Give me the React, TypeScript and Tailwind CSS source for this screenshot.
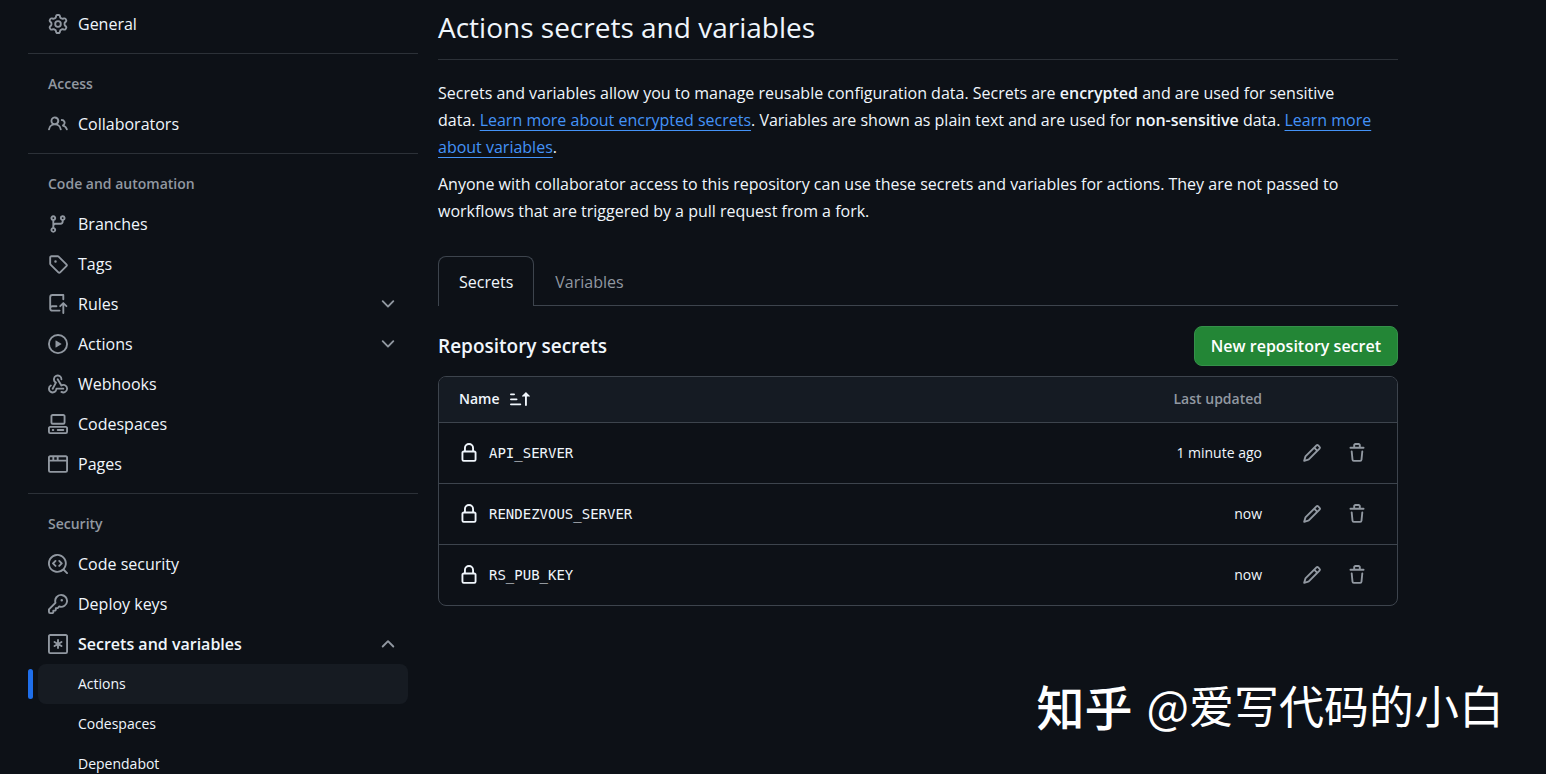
import React from 'react';

const ICONS = {
  gear: 'M8 0a8.2 8.2 0 0 1 .701.031C9.444.095 9.99.645 10.16 1.29l.288 1.107c.018.066.079.158.212.224.231.114.454.243.668.386.123.082.233.09.299.071l1.103-.303c.644-.176 1.392.021 1.82.63.27.385.506.792.704 1.218.315.675.111 1.422-.364 1.891l-.814.806c-.049.048-.098.147-.088.294.016.257.016.515 0 .772-.01.147.038.246.088.294l.814.806c.475.469.679 1.216.364 1.891a7.977 7.977 0 0 1-.704 1.217c-.428.61-1.176.807-1.82.63l-1.102-.302c-.067-.019-.177-.011-.3.071a5.909 5.909 0 0 1-.668.386c-.133.066-.194.158-.211.224l-.29 1.106c-.168.646-.715 1.196-1.458 1.26a8.006 8.006 0 0 1-1.402 0c-.743-.064-1.289-.614-1.458-1.26l-.289-1.106c-.018-.066-.079-.158-.212-.224a5.738 5.738 0 0 1-.668-.386c-.123-.082-.233-.09-.299-.071l-1.103.303c-.644.176-1.392-.021-1.82-.63a8.12 8.12 0 0 1-.704-1.218c-.315-.675-.111-1.422.363-1.891l.815-.806c.05-.048.098-.147.088-.294a6.214 6.214 0 0 1 0-.772c.01-.147-.038-.246-.088-.294l-.815-.806C.635 6.045.431 5.298.746 4.623a7.92 7.92 0 0 1 .704-1.217c.428-.61 1.176-.807 1.82-.63l1.102.302c.067.019.177.011.3-.071.214-.143.437-.272.668-.386.133-.066.194-.158.211-.224l.29-1.106C6.009.645 6.556.095 7.299.03 7.53.01 7.764 0 8 0Zm-.571 1.525c-.036.003-.108.036-.137.146l-.289 1.105c-.147.561-.549.967-.998 1.189-.173.086-.34.183-.5.29-.417.278-.97.423-1.529.27l-1.103-.303c-.109-.03-.175.016-.195.045-.22.312-.412.644-.573.99-.014.031-.021.11.059.19l.815.806c.411.406.562.957.53 1.456a4.709 4.709 0 0 0 0 .582c.032.499-.119 1.05-.53 1.456l-.815.806c-.081.08-.073.159-.059.19.162.346.353.677.573.989.02.03.085.076.195.046l1.102-.303c.56-.153 1.113-.008 1.53.27.161.107.328.204.501.29.447.222.85.629.997 1.189l.289 1.105c.029.109.101.143.137.146a6.6 6.6 0 0 0 1.142 0c.036-.003.108-.036.137-.146l.289-1.105c.147-.561.549-.967.998-1.189.173-.086.34-.183.5-.29.417-.278.97-.423 1.529-.27l1.103.303c.109.029.175-.016.195-.045.22-.313.411-.644.573-.99.014-.031.021-.11-.059-.19l-.815-.806c-.411-.406-.562-.957-.53-1.456a4.709 4.709 0 0 0 0-.582c-.032-.499.119-1.05.53-1.456l.815-.806c.081-.08.073-.159.059-.19a6.464 6.464 0 0 0-.573-.989c-.02-.03-.085-.076-.195-.046l-1.102.303c-.56.153-1.113.008-1.53-.27a4.44 4.44 0 0 0-.501-.29c-.447-.222-.85-.629-.997-1.189l-.289-1.105c-.029-.11-.101-.143-.137-.146a6.6 6.6 0 0 0-1.142 0ZM11 8a3 3 0 1 1-6 0 3 3 0 0 1 6 0ZM9.5 8a1.5 1.5 0 1 0-3.001.001A1.5 1.5 0 0 0 9.5 8Z',
  people: 'M2 5.5a3.5 3.5 0 1 1 5.898 2.549 5.508 5.508 0 0 1 3.034 4.084.75.75 0 1 1-1.482.235 4 4 0 0 0-7.9 0 .75.75 0 0 1-1.482-.236A5.507 5.507 0 0 1 3.102 8.05 3.493 3.493 0 0 1 2 5.5ZM11 4a3.001 3.001 0 0 1 2.22 5.018 5.01 5.01 0 0 1 2.56 3.012.749.749 0 0 1-.885.954.752.752 0 0 1-.549-.514 3.507 3.507 0 0 0-2.522-2.372.75.75 0 0 1-.574-.73v-.352a.75.75 0 0 1 .416-.672A1.5 1.5 0 0 0 11 5.5.75.75 0 0 1 11 4Zm-5.5-.5a2 2 0 1 0-.001 3.999A2 2 0 0 0 5.5 3.5Z',
  branch: 'M9.5 3.25a2.25 2.25 0 1 1 3 2.122V6A2.5 2.5 0 0 1 10 8.5H6a1 1 0 0 0-1 1v1.128a2.251 2.251 0 1 1-1.5 0V5.372a2.25 2.25 0 1 1 1.5 0v1.836A2.493 2.493 0 0 1 6 7h4a1 1 0 0 0 1-1v-.628A2.25 2.25 0 0 1 9.5 3.25Zm-6 0a.75.75 0 1 0 1.5 0 .75.75 0 0 0-1.5 0Zm8.25-.75a.75.75 0 1 0 0 1.5.75.75 0 0 0 0-1.5ZM4.25 12a.75.75 0 1 0 0 1.5.75.75 0 0 0 0-1.5Z',
  tag: 'M1 7.775V2.75C1 1.784 1.784 1 2.75 1h5.025c.464 0 .91.184 1.238.513l6.25 6.25a1.75 1.75 0 0 1 0 2.474l-5.026 5.026a1.75 1.75 0 0 1-2.474 0l-6.25-6.25A1.752 1.752 0 0 1 1 7.775Zm1.5 0c0 .066.026.13.073.177l6.25 6.25a.25.25 0 0 0 .354 0l5.025-5.025a.25.25 0 0 0 0-.354l-6.25-6.25a.25.25 0 0 0-.177-.073H2.75a.25.25 0 0 0-.25.25ZM6 5a1 1 0 1 1 0 2 1 1 0 0 1 0-2Z',
  repoPush: 'M1 2.5A2.5 2.5 0 0 1 3.5 0h8.75a.75.75 0 0 1 .75.75v3.5a.75.75 0 0 1-1.5 0V1.5h-8a1 1 0 0 0-1 1v6.708A2.493 2.493 0 0 1 3.5 9h3.25a.75.75 0 0 1 0 1.5H3.5a1 1 0 0 0 0 2h5.75a.75.75 0 0 1 0 1.5H3.5A2.5 2.5 0 0 1 1 11.5Zm13.23 7.79h-.001l-1.224-1.224v6.184a.75.75 0 0 1-1.5 0V9.066L10.28 10.29a.75.75 0 0 1-1.06-1.061l2.505-2.504a.75.75 0 0 1 1.06 0L15.29 9.23a.751.751 0 0 1-.018 1.042.751.751 0 0 1-1.042.018Z',
  play: 'M8 0a8 8 0 1 1 0 16A8 8 0 0 1 8 0ZM1.5 8a6.5 6.5 0 1 0 13 0 6.5 6.5 0 0 0-13 0Zm4.879-2.773 4.264 2.559a.25.25 0 0 1 0 .428l-4.264 2.559A.25.25 0 0 1 6 10.559V5.442a.25.25 0 0 1 .379-.215Z',
  webhook: 'M5.5 4.25a2.25 2.25 0 0 1 4.5 0 .75.75 0 0 0 1.5 0 3.75 3.75 0 1 0-6.14 2.889l-2.272 4.258a.75.75 0 0 0 1.324.706L7 7.25a.75.75 0 0 0-.309-1.015A2.25 2.25 0 0 1 5.5 4.25Z M7.364 3.607a.75.75 0 0 1 1.03.257l2.608 4.349a3.75 3.75 0 1 1-.628 6.785.75.75 0 0 1 .752-1.299 2.25 2.25 0 1 0-.033-3.88.75.75 0 0 1-1.03-.256L7.107 4.636a.75.75 0 0 1 .257-1.03Z M2.9 8.776A.75.75 0 0 1 2.625 9.8 2.25 2.25 0 1 0 6 11.75a.75.75 0 0 1 .75-.751h5.5a.75.75 0 0 1 0 1.5H7.425a3.751 3.751 0 1 1-5.55-3.998.75.75 0 0 1 1.024.274Z',
  codespaces: 'M0 11.25c0-.966.784-1.75 1.75-1.75h12.5c.966 0 1.75.784 1.75 1.75v3A1.75 1.75 0 0 1 14.25 16H1.75A1.75 1.75 0 0 1 0 14.25Zm2-9.5C2 .784 2.784 0 3.75 0h8.5C13.216 0 14 .784 14 1.75v5a1.75 1.75 0 0 1-1.75 1.75h-8.5A1.75 1.75 0 0 1 2 6.75Zm1.75-.25a.25.25 0 0 0-.25.25v5c0 .138.112.25.25.25h8.5a.25.25 0 0 0 .25-.25v-5a.25.25 0 0 0-.25-.25Zm-2 9.5a.25.25 0 0 0-.25.25v3c0 .138.112.25.25.25h12.5a.25.25 0 0 0 .25-.25v-3a.25.25 0 0 0-.25-.25Z M7 12.75a.75.75 0 0 1 .75-.75h4.5a.75.75 0 0 1 0 1.5h-4.5a.75.75 0 0 1-.75-.75Zm-4 0a.75.75 0 0 1 .75-.75h.5a.75.75 0 0 1 0 1.5h-.5a.75.75 0 0 1-.75-.75Z',
  browser: 'M0 2.75C0 1.784.784 1 1.75 1h12.5c.966 0 1.75.784 1.75 1.75v10.5A1.75 1.75 0 0 1 14.25 15H1.75A1.75 1.75 0 0 1 0 13.25ZM14.5 6h-13v7.25c0 .138.112.25.25.25h12.5a.25.25 0 0 0 .25-.25Zm-6-3.5v2h6V2.75a.25.25 0 0 0-.25-.25ZM5 2.5v2h2v-2Zm-3.25 0a.25.25 0 0 0-.25.25V4.5h2v-2Z',
  codescan: 'M8.47 4.97a.75.75 0 0 0 0 1.06L9.94 7.5 8.47 8.97a.75.75 0 1 0 1.06 1.06l2-2a.75.75 0 0 0 0-1.06l-2-2a.75.75 0 0 0-1.06 0ZM6.53 6.03a.75.75 0 0 0-1.06-1.06l-2 2a.75.75 0 0 0 0 1.06l2 2a.75.75 0 1 0 1.06-1.06L5.06 7.5l1.47-1.47Z M12.246 13.307a7.501 7.501 0 1 1 1.06-1.06l2.474 2.473a.749.749 0 1 1-1.06 1.06l-2.474-2.473ZM1.5 7.5a6.002 6.002 0 0 0 3.608 5.504 6.002 6.002 0 0 0 6.486-1.117.748.748 0 0 1 .292-.293A6 6 0 1 0 1.5 7.5Z',
  key: 'M10.5 0a5.499 5.499 0 1 1-1.288 10.848l-.932.932a.749.749 0 0 1-.53.22H7v.75a.749.749 0 0 1-.22.53l-.5.5a.749.749 0 0 1-.53.22H5v.75a.749.749 0 0 1-.22.53l-.5.5a.749.749 0 0 1-.53.22h-2A1.75 1.75 0 0 1 0 14.25v-2c0-.199.079-.389.22-.53l4.932-4.932A5.5 5.5 0 0 1 10.5 0Zm-4 5.5c-.001.431.069.86.205 1.269a.75.75 0 0 1-.181.768L1.5 12.56v1.69c0 .138.112.25.25.25h1.69l.06-.06v-1.19a.75.75 0 0 1 .75-.75h1.19l.06-.06v-1.19a.75.75 0 0 1 .75-.75h1.19l1.023-1.025a.75.75 0 0 1 .768-.18A4 4 0 1 0 6.5 5.5ZM11 6a1 1 0 1 1 0-2 1 1 0 0 1 0 2Z',
  asterisk: 'M0 1.75C0 .784.784 0 1.75 0h12.5C15.216 0 16 .784 16 1.75v12.5A1.75 1.75 0 0 1 14.25 16H1.75A1.75 1.75 0 0 1 0 14.25Zm1.75-.25a.25.25 0 0 0-.25.25v12.5c0 .138.112.25.25.25h12.5a.25.25 0 0 0 .25-.25V1.75a.25.25 0 0 0-.25-.25Z M8 4a.75.75 0 0 1 .75.75V6.7l1.69-.975a.75.75 0 0 1 .75 1.3L9.5 8l1.69.975a.75.75 0 0 1-.75 1.3L8.75 9.3v1.95a.75.75 0 0 1-1.5 0V9.3l-1.69.975a.75.75 0 0 1-.75-1.3L6.5 8l-1.69-.975a.75.75 0 0 1 .75-1.3l1.69.975V4.75A.75.75 0 0 1 8 4Z',
  lock: 'M4 4a4 4 0 0 1 8 0v2h.25c.966 0 1.75.784 1.75 1.75v5.5A1.75 1.75 0 0 1 12.25 15h-8.5A1.75 1.75 0 0 1 2 13.25v-5.5C2 6.784 2.784 6 3.75 6H4Zm8.25 3.5h-8.5a.25.25 0 0 0-.25.25v5.5c0 .138.112.25.25.25h8.5a.25.25 0 0 0 .25-.25v-5.5a.25.25 0 0 0-.25-.25ZM10.5 6V4a2.5 2.5 0 1 0-5 0v2Z',
  pencil: 'M11.013 1.427a1.75 1.75 0 0 1 2.474 0l1.086 1.086a1.75 1.75 0 0 1 0 2.474l-8.61 8.61c-.21.21-.47.364-.756.445l-3.251.93a.75.75 0 0 1-.927-.928l.929-3.25c.081-.286.235-.547.445-.758l8.61-8.61Zm.176 4.823L9.75 4.81l-6.286 6.287a.253.253 0 0 0-.064.108l-.558 1.953 1.953-.558a.253.253 0 0 0 .108-.064Zm1.238-3.763a.25.25 0 0 0-.354 0L10.811 3.75l1.439 1.44 1.263-1.263a.25.25 0 0 0 0-.354Z',
  trash: 'M11 1.75V3h2.25a.75.75 0 0 1 0 1.5H2.75a.75.75 0 0 1 0-1.5H5V1.75C5 .784 5.784 0 6.75 0h2.5C10.216 0 11 .784 11 1.75ZM4.496 6.675l.66 6.6a.25.25 0 0 0 .249.225h5.19a.25.25 0 0 0 .249-.225l.66-6.6a.75.75 0 0 1 1.492.149l-.66 6.6A1.748 1.748 0 0 1 10.595 15h-5.19a1.75 1.75 0 0 1-1.741-1.575l-.66-6.6a.75.75 0 1 1 1.492-.15ZM6.5 1.75V3h3V1.75a.25.25 0 0 0-.25-.25h-2.5a.25.25 0 0 0-.25.25Z',
  chevronDown: 'M12.78 5.22a.749.749 0 0 1 0 1.06l-4.25 4.25a.749.749 0 0 1-1.06 0L3.22 6.28a.749.749 0 1 1 1.06-1.06L8 8.939l3.72-3.719a.749.749 0 0 1 1.06 0Z',
  chevronUp: 'M3.22 10.53a.749.749 0 0 1 0-1.06l4.25-4.25a.749.749 0 0 1 1.06 0l4.25 4.25a.749.749 0 1 1-1.06 1.06L8 6.811 4.28 10.53a.749.749 0 0 1-1.06 0Z',
  sortAsc: 'm12.927 2.573 3 3A.25.25 0 0 1 15.75 6H13.5v6.75a.75.75 0 0 1-1.5 0V6H9.75a.25.25 0 0 1-.177-.427l3-3a.25.25 0 0 1 .354 0ZM0 12.25a.75.75 0 0 1 .75-.75h7.5a.75.75 0 0 1 0 1.5H.75a.75.75 0 0 1-.75-.75Zm0-4a.75.75 0 0 1 .75-.75h4.5a.75.75 0 0 1 0 1.5H.75A.75.75 0 0 1 0 8.25Zm0-4a.75.75 0 0 1 .75-.75h2.5a.75.75 0 0 1 0 1.5H.75A.75.75 0 0 1 0 4.25Z',
};

type IconName = keyof typeof ICONS;

function Icon({ name, className = '' }: { name: IconName; className?: string }) {
  return (
    <svg viewBox="0 0 16 16" fill="currentColor" aria-hidden="true" className={`size-5 shrink-0 ${className}`}>
      <path d={ICONS[name]} />
    </svg>
  );
}

type NavEntry = { icon: IconName; label: string; expandable?: boolean };

const CODE_ITEMS: NavEntry[] = [
  { icon: 'branch', label: 'Branches' },
  { icon: 'tag', label: 'Tags' },
  { icon: 'repoPush', label: 'Rules', expandable: true },
  { icon: 'play', label: 'Actions', expandable: true },
  { icon: 'webhook', label: 'Webhooks' },
  { icon: 'codespaces', label: 'Codespaces' },
  { icon: 'browser', label: 'Pages' },
];

const SECURITY_ITEMS: NavEntry[] = [
  { icon: 'codescan', label: 'Code security' },
  { icon: 'key', label: 'Deploy keys' },
];

const SECRETS = [
  { name: 'API_SERVER', updated: '1 minute ago' },
  { name: 'RENDEZVOUS_SERVER', updated: 'now' },
  { name: 'RS_PUB_KEY', updated: 'now' },
];

const rowClass = 'flex h-10 w-full items-center gap-2.5 rounded-lg px-2.5 text-left';

function NavItem({ icon, label, expandable }: NavEntry) {
  return (
    <li className="px-2.5">
      {expandable ? (
        <button type="button" aria-expanded="false" className={rowClass}>
          <Icon name={icon} className="text-[#9198a1]" />
          <span className="flex-1">{label}</span>
          <Icon name="chevronDown" className="text-[#9198a1]" />
        </button>
      ) : (
        <a href="#" className={rowClass}>
          <Icon name={icon} className="text-[#9198a1]" />
          <span>{label}</span>
        </a>
      )}
    </li>
  );
}

function NavGroup({ title, children }: { title: string; children: React.ReactNode }) {
  return (
    <section>
      <div className="mt-[9px] mb-2.5 border-t border-[#2c3138]" />
      <h3 className="flex h-10 items-center px-5 text-sm font-semibold text-[#9198a1]">{title}</h3>
      <ul>{children}</ul>
    </section>
  );
}

function Sidebar() {
  return (
    <nav aria-label="Settings" className="w-[390px] shrink-0 pt-1">
      <ul>
        <NavItem icon="gear" label="General" />
      </ul>
      <NavGroup title="Access">
        <NavItem icon="people" label="Collaborators" />
      </NavGroup>
      <NavGroup title="Code and automation">
        {CODE_ITEMS.map((item) => (
          <NavItem key={item.label} {...item} />
        ))}
      </NavGroup>
      <NavGroup title="Security">
        {SECURITY_ITEMS.map((item) => (
          <NavItem key={item.label} {...item} />
        ))}
        <li>
          <div className="px-2.5">
            <button type="button" aria-expanded="true" className={`${rowClass} font-semibold`}>
              <Icon name="asterisk" className="text-[#9198a1]" />
              <span className="flex-1">Secrets and variables</span>
              <Icon name="chevronUp" className="text-[#9198a1]" />
            </button>
          </div>
          <ul className="text-sm">
            <li className="flex items-center gap-[5px] pr-2.5">
              <span className="h-[30px] w-[5px] rounded-full bg-[#1f6feb]" />
              <a href="#" aria-current="page" className="flex h-10 flex-1 items-center rounded-lg bg-[#161b22] pl-10">
                Actions
              </a>
            </li>
            <li>
              <a href="#" className="flex h-10 items-center pl-[50px]">Codespaces</a>
            </li>
            <li>
              <a href="#" className="flex h-10 items-center pl-[50px]">Dependabot</a>
            </li>
          </ul>
        </li>
      </NavGroup>
    </nav>
  );
}

const linkClass = 'text-[#4493f8] underline decoration-1 underline-offset-4';

function SecretsTable() {
  return (
    <div className="mt-2.5 overflow-hidden rounded-lg border border-[#3d444d]">
      <table className="w-full border-collapse text-sm">
        <thead>
          <tr className="h-[45px] border-b border-[#3d444d] bg-[#151b23]">
            <th scope="col" className="pl-5 text-left font-semibold">
              <button type="button" className="flex items-center gap-2.5">
                Name
                <Icon name="sortAsc" />
              </button>
            </th>
            <th scope="col" className="pr-[30px] text-right font-semibold text-[#9198a1]">Last updated</th>
            <th scope="col" className="w-[105px]" aria-label="Actions" />
          </tr>
        </thead>
        <tbody>
          {SECRETS.map(({ name, updated }) => (
            <tr key={name} className="h-[61px] border-b border-[#3d444d] last:border-b-0">
              <td className="pl-5">
                <div className="flex items-center gap-2.5">
                  <Icon name="lock" />
                  <code className="font-['DejaVu_Sans_Mono',monospace]">{name}</code>
                </div>
              </td>
              <td className="pr-[30px] text-right">{updated}</td>
              <td className="pr-5 text-[#9198a1]">
                <div className="flex gap-[5px]">
                  <button type="button" aria-label={`Edit ${name}`} className="flex size-10 items-center justify-center">
                    <Icon name="pencil" />
                  </button>
                  <button type="button" aria-label={`Delete ${name}`} className="flex size-10 items-center justify-center">
                    <Icon name="trash" />
                  </button>
                </div>
              </td>
            </tr>
          ))}
        </tbody>
      </table>
    </div>
  );
}

export default function App() {
  return (
    <div className="relative flex h-screen gap-5 overflow-hidden bg-[#0d1117] pr-[148px] pl-7 font-['Open_Sans','Noto_Sans',sans-serif] text-base text-[#f0f6fc]">
      <Sidebar />
      <main className="min-w-0 flex-1">
        <h1 className="border-b border-[#2c3138] pt-[7px] pb-3 text-[28px] leading-10">Actions secrets and variables</h1>
        <div className="mt-5 space-y-2.5 leading-[27px]">
          <p>
            Secrets and variables allow you to manage reusable configuration data. Secrets are{' '}
            <strong className="font-semibold">encrypted</strong> and are used for sensitive
            <br />
            data. <a href="#" className={linkClass}>Learn more about encrypted secrets</a>. Variables are shown as plain
            text and are used for <strong className="font-semibold">non-sensitive</strong> data.{' '}
            <a href="#" className={linkClass}>Learn more about variables</a>.
          </p>
          <p>
            Anyone with collaborator access to this repository can use these secrets and variables for actions. They are
            not passed to workflows that are triggered by a pull request from a fork.
          </p>
        </div>

        <div role="tablist" className="mt-[31px] flex h-[50px] border-b border-[#3d444d]">
          <button
            type="button"
            role="tab"
            aria-selected="true"
            className="-mb-px rounded-t-lg border border-b-0 border-[#3d444d] bg-[#0d1117] px-5"
          >
            Secrets
          </button>
          <button
            type="button"
            role="tab"
            aria-selected="false"
            className="-mb-px border border-b-0 border-transparent px-5 text-[#9198a1]"
          >
            Variables
          </button>
        </div>

        <div className="mt-5 flex items-center justify-between">
          <h2 className="text-[19px] font-semibold">Repository secrets</h2>
          <button type="button" className="h-10 rounded-lg border border-[#35914a] bg-[#238636] px-4 font-semibold text-white">
            New repository secret
          </button>
        </div>
        <SecretsTable />
      </main>

      <div className="absolute right-[42px] bottom-[37px] flex items-center gap-3.5 font-['Noto_Sans_CJK_SC',sans-serif] leading-[64px] text-white">
        <span className="text-[48px] font-medium">知乎</span>
        <span className="text-[45px]">@爱写代码的小白</span>
      </div>
    </div>
  );
}
